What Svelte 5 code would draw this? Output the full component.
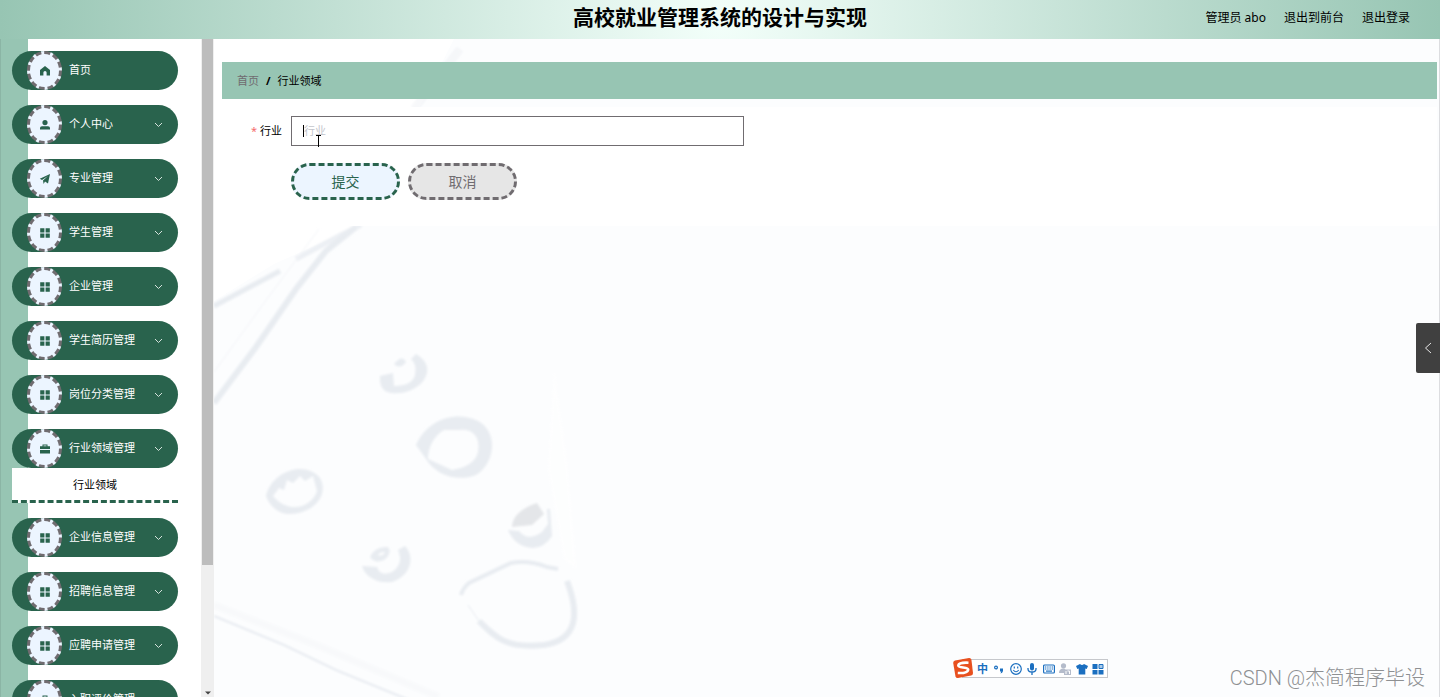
<script>
  const items = [
    { label: '首页', icon: 'home' },
    { label: '个人中心', icon: 'user', more: true },
    { label: '专业管理', icon: 'plane', more: true },
    { label: '学生管理', icon: 'menu', more: true },
    { label: '企业管理', icon: 'menu', more: true },
    { label: '学生简历管理', icon: 'menu', more: true },
    { label: '岗位分类管理', icon: 'menu', more: true },
    { label: '行业领域管理', icon: 'case', more: true, child: '行业领域' },
    { label: '企业信息管理', icon: 'menu', more: true },
    { label: '招聘信息管理', icon: 'menu', more: true },
    { label: '应聘申请管理', icon: 'menu', more: true },
    { label: '入职评价管理', icon: 'case', more: true }
  ];
  const icons = {
    home: 'M6 1 11 5V10.5H7.6V7.6A1.6 1.6 0 0 0 4.4 7.6V10.5H1V5Z',
    user: 'M6 1A2.6 2.6 0 1 1 6 6.2 2.6 2.6 0 0 1 6 1ZM1 10.5V9Q1 7.3 3 7.3H9Q11 7.3 11 9V10.5Z',
    plane: 'M11 1 9 10.5 6 8.6 4.6 11 4 7.6 9 3 3 7 .8 5.8Z',
    menu: 'M1.2 1.2H5.4V5.4H1.2ZM6.6 1.2H10.8V5.4H6.6ZM1.2 6.6H5.4V10.8H1.2ZM6.6 6.6H10.8V10.8H6.6Z',
    case: 'M1 3.2H3.5V1.4H8.5V3.2H11V6H1ZM4.5 2.4V3.2H7.5V2.4ZM1 7H11V10.6H1Z'
  };
  let industry = $state('');
</script>

<div class="page">
  <header>
    <h1>高校就业管理系统的设计与实现</h1>
    <nav class="account">
      <span>管理员 abo</span>
      <a href="#front">退出到前台</a>
      <a href="#logout">退出登录</a>
    </nav>
  </header>

  <div class="body">
    <aside>
      <ul class="menu">
        {#each items as item}
          <li>
            <button class="item" type="button">
              <span class="badge">
                <svg class="glyph" viewBox="0 0 12 12" aria-hidden="true"><path fill-rule="evenodd" d={icons[item.icon]} /></svg>
              </span>
              <span class="label">{item.label}</span>
              {#if item.more}
                <svg class="chevron" viewBox="0 0 9 6" aria-hidden="true"><path d="M1 1 4.5 4.5 8 1" /></svg>
              {/if}
            </button>
            {#if item.child}
              <a class="child" href="#industry">{item.child}</a>
            {/if}
          </li>
        {/each}
      </ul>
      <div class="track">
        <div class="thumb"></div>
        <svg class="down" viewBox="0 0 6 4" aria-hidden="true"><path d="M0 .5H6L3 3.5Z" /></svg>
      </div>
    </aside>

    <main>
      <svg class="backdrop" viewBox="0 0 1226 658" preserveAspectRatio="xMinYMin slice" aria-hidden="true">
        <defs>
          <filter id="soft" x="-10%" y="-10%" width="120%" height="120%"><feGaussianBlur stdDeviation="0.8" /></filter>
        </defs>
        <path d="M0 0H240L145 187 60 225 0 262Z" fill="#fff" />
        <path d="M340 330 354 430 362 530 350 520 334 430Z" fill="#fff" opacity=".6" filter="url(#soft)" />
        <g filter="url(#soft)" fill="none" stroke="#e8ecf1">
          <path d="M0 267 30 251 66 232" stroke-width="5" />
          <path d="M82 220 125 197 147 186" stroke-width="5" opacity=".8" />
          <path d="M200 70 246 10" stroke-width="8" opacity=".35" />
          <path d="M0 364 42 308 82 250 112 212 142 188" stroke-width="6" />
          <path d="M0 333 50 264 105 190" stroke-width="1" stroke="#f3f5f8" />
          <path d="M0 577 70 606 122 631 195 661" stroke-width="2" />
          <path d="M0 566 100 605 225 658" stroke-width="7" stroke="#f8f9fb" />
          <g fill="#e8ecf1" stroke="none">
            <path fill-rule="evenodd" d="M202 315Q217 324 212 337C206 352 183 358 171 352Q165 347 166 337L179 334 180 347Q198 347 201 336 203 325 197 320ZM180 325Q188 315 192 323 186 331 180 325Z" />
            <path fill-rule="evenodd" d="M202 406C213 380 243 371 264 382 285 393 281 425 262 436 241 444 220 434 212 420ZM230 391C219 397 214 410 214 420L238 431Q261 427 264 413C267 398 258 389 246 391Z" />
            <path fill-rule="evenodd" d="M52 457C58 432 91 421 106 439 116 457 98 476 73 475 60 473 54 463 52 457ZM59 457C75 476 98 468 103 452L99 437 91 442 86 437 79 444 73 441 70 451 65 449Z" />
            <path d="M148 527 163 528Q166 538 178 533 190 525 184 511L191 507C202 519 196 537 178 543 164 545 151 538 148 527Z" />
            <path fill-rule="evenodd" d="M156 518Q161 507 174 508 179 514 170 521 161 525 156 518ZM164 516Q167 518 171 514 168 511 164 516Z" />
            <path d="M294 491 305 492Q314 503 328 493L334 485 333 470 336 470 338 497Q330 509 319 509 301 508 294 491Z" />
            <path d="M298 488C298 478 307 469 323 464L330 475 318 486Z" fill="#e4e6e9" />
          </g>
          <path d="M247 556Q249 549 255 544L297 524Q315 521 333 528L344 530" stroke-width="4" />
          <path d="M353 542C366 576 363 601 330 606 293 610 282 599 265 582" stroke-width="6" />
          <path d="M265 582 254 566" stroke-width="1" />
        </g>
      </svg>

      <div class="crumbs">
        <a href="#home">首页</a><b>/</b><span>行业领域</span>
      </div>

      <form onsubmit={(e) => e.preventDefault()}>
        <div class="field">
          <label for="industry"><i>*</i> 行业</label>
          <div class="control">
            <input id="industry" type="text" placeholder="行业" bind:value={industry} />
            <span class="caret"></span>
            <svg class="pointer" viewBox="0 0 5 12" aria-hidden="true"><path d="M0 .5H5M2.5 0V12" /></svg>
          </div>
        </div>
        <div class="actions">
          <button class="submit" type="submit">提交</button>
          <button class="cancel" type="button">取消</button>
        </div>
      </form>
    </main>
  </div>

  <button class="drawer" type="button" aria-label="展开">
    <svg viewBox="0 0 8 12" aria-hidden="true"><path d="M7 1 1.5 6 7 11" /></svg>
  </button>

  <div class="ime">
    <svg class="logo" viewBox="0 0 22 22" aria-hidden="true">
      <path d="M3 3.5 17 1Q19 .8 19.4 2.6L21 16Q21 18 19.2 18.5L6 21Q4 21.2 3.5 19.4L1.2 6Q1 4 3 3.5Z" fill="#e8501f" />
      <path d="M16.5 5.7Q7 5.2 6.3 8.3C6 11.3 16.3 9.6 16.2 12.7Q15.5 16.5 5.8 16" fill="none" stroke="#fff" stroke-width="2.6" />
    </svg>
    <span class="lang">中</span>
    <svg viewBox="0 0 12 12" aria-hidden="true"><circle cx="3" cy="4.5" r="1.4" fill="none" stroke="#1b6fc0" stroke-width="1.2" /><path d="M7 5.500H10V8Q9.500 10 7.500 10.500L8.300 8.500H7Z" /></svg>
    <svg viewBox="0 0 12 12" aria-hidden="true"><g fill="none" stroke="#1b6fc0" stroke-width="1.2"><circle cx="6" cy="6" r="5.3" /><path d="M3.3 7Q6 10.5 8.7 7M4.300 3.500V5.500M7.700 3.500V5.500" /></g></svg>
    <svg viewBox="0 0 12 12" aria-hidden="true"><rect x="4" width="4" height="7.5" rx="2" /><path d="M2 5V6Q2 9 6 9T10 6V5M6 9V12" fill="none" stroke="#1b6fc0" stroke-width="1.3" /></svg>
    <svg viewBox="0 0 12 12" aria-hidden="true"><rect x=".6" y="2" width="10.8" height="8" rx="1" fill="none" stroke="#1b6fc0" stroke-width="1.2" /><path d="M2 4H10M2 6H10" stroke="#1b6fc0" stroke-width="1.2" stroke-dasharray="1.4 .8" /><path d="M3 7.5H9V8.7H3Z" /></svg>
    <svg class="muted" viewBox="0 0 12 12" aria-hidden="true"><circle cx="4.5" cy="2.8" r="2.6" /><path d="M0 10Q0 5.5 4.5 5.5 6 5.500 6.500 6.500H12V12H5V10Z" /><path d="M7 8V11M8.500 8H10.500V11" fill="none" stroke="#fff" /></svg>
    <svg viewBox="0 0 12 12" aria-hidden="true"><path d="M4 1Q6 3 8 1L12 3 10.7 6 9.3 5.5V11.500H2.700V5.500L1.300 6 0 3Z" /></svg>
    <svg viewBox="0 0 12 12" aria-hidden="true"><path d="M.5 1H5.5V6H.5ZM.5 7H5.500V11.500H.5ZM6.500 7H11.500V11.500H6.500Z" /><path d="M7 1.500H11V5.500H7Z" fill="#a9c9e8" stroke="#1b6fc0" /></svg>
  </div>

  <div class="watermark">CSDN @杰简程序毕设</div>
</div>

<style>
  :global(body) {
    margin: 0;
    overflow: hidden;
  }

  .page {
    position: relative;
    display: flex;
    flex-direction: column;
    height: 100vh;
    overflow: hidden;
    background: #fcfdfe;
    color: #000;
    font-family: "Noto Sans", "Noto Sans CJK SC", sans-serif;
    font-size: 11px;
  }

  a {
    color: inherit;
    text-decoration: none;
  }

  button,
  input {
    box-sizing: border-box;
    margin: 0;
    font: inherit;
  }

  header {
    display: grid;
    grid-template-columns: 1fr auto 1fr;
    flex: none;
    height: 39px;
    background: radial-gradient(circle farthest-side at center, #f3fffa 0%, #97c5b3 100%);
  }

  h1 {
    grid-column: 2;
    margin: 0;
    font-size: 21px;
    line-height: 34px;
  }

  .account {
    display: flex;
    justify-content: flex-end;
    gap: 18px;
    padding-right: 30px;
    font-size: 12px;
    line-height: 36px;
  }

  .body {
    display: flex;
    flex: 1;
    min-height: 0;
  }

  aside {
    display: flex;
    flex: none;
    width: 214px;
    overflow: hidden;
    background: linear-gradient(90deg, #8bb5a5 1px, #97c5b3 1px 28px, #fff 28px);
  }

  .menu {
    display: flex;
    flex: 1;
    flex-direction: column;
    gap: 15px;
    margin: 0;
    padding: 12px 23px 0 12px;
    list-style: none;
  }

  .item {
    display: flex;
    align-items: center;
    width: 100%;
    height: 39px;
    padding: 0 15px 0 15px;
    border: 0;
    border-radius: 20px;
    background: #29634d;
    color: #fff;
    line-height: 16px;
  }

  .badge {
    display: grid;
    box-sizing: border-box;
    place-items: center;
    width: 35px;
    height: 39px;
    margin-right: 7px;
    border: 3px dashed #706c70;
    border-radius: 100%;
    background: #ecf5ff;
  }

  .glyph {
    width: 12px;
    height: 12px;
    fill: #29634d;
  }

  .label {
    flex: 1;
    padding-bottom: 2px;
    text-align: left;
  }

  .chevron {
    width: 9px;
    height: 6px;
    fill: none;
    stroke: #d5e2dc;
  }

  .child {
    display: block;
    box-sizing: border-box;
    height: 35px;
    border-bottom: 3px dashed #29634d;
    background: #fff;
    line-height: 34px;
    text-align: center;
  }

  .track {
    display: flex;
    flex-direction: column;
    align-items: center;
    justify-content: space-between;
    width: 13px;
    background: #efefef;
  }

  .thumb {
    width: 11px;
    height: 80%;
    background: #bdbdbd;
  }

  .down {
    width: 6px;
    height: 4px;
    margin-bottom: 2px;
    fill: #444;
  }

  main {
    position: relative;
    flex: 1;
    min-width: 0;
    padding: 23px 2px 0 8px;
    border-right: 1px solid #dcdde0;
  }

  .backdrop {
    position: absolute;
    inset: 0;
    width: 100%;
    height: 100%;
  }

  .crumbs {
    position: relative;
    display: flex;
    gap: 7px;
    padding-left: 15px;
    background: #97c5b3;
    line-height: 37px;
  }

  .crumbs a {
    color: #706c70;
  }

  form {
    position: relative;
    margin-top: 8px;
    padding: 9px 0 26px;
    background: #fff;
  }

  .field {
    display: flex;
    line-height: 30px;
  }

  label {
    width: 60px;
    margin-right: 9px;
    text-align: right;
  }

  i {
    color: #f56c6c;
    font-style: normal;
  }

  .control {
    position: relative;
    flex: 1;
    min-width: 0;
    max-width: 453px;
    height: 30px;
  }

  input {
    display: block;
    width: 100%;
    height: 30px;
    padding: 0 12px;
    border: 1px solid #706c70;
    background: #fff;
    outline: none;
  }

  input::placeholder {
    color: #c3c5cb;
    opacity: 1;
  }

  .caret {
    position: absolute;
    top: 9px;
    left: 12px;
    width: 1px;
    height: 12px;
    background: #000;
  }

  .pointer {
    position: absolute;
    top: 19px;
    left: 25px;
    width: 5px;
    height: 12px;
    stroke: #000;
  }

  .actions {
    display: flex;
    gap: 8px;
    margin: 17px 0 0 69px;
  }

  .actions button {
    width: 109px;
    height: 37px;
    padding: 0;
    border: 3px dashed #29634d;
    border-radius: 19px;
    background: #ecf5ff;
    color: #29634d;
    font-size: 14px;
    line-height: 30px;
  }

  .actions .cancel {
    border-color: #706c70;
    background: #e6e6e6;
    color: #706c70;
  }

  .drawer {
    position: absolute;
    top: 323px;
    right: 0;
    display: grid;
    place-items: center;
    width: 24px;
    height: 50px;
    padding: 0;
    border: 0;
    border-radius: 2px 0 0 2px;
    background: #404040;
  }

  .drawer svg {
    width: 8px;
    height: 12px;
    fill: none;
    stroke: #e6e6e6;
  }

  .ime {
    position: absolute;
    right: 332px;
    bottom: 19px;
    display: flex;
    align-items: center;
    justify-content: space-between;
    box-sizing: border-box;
    width: 146px;
    height: 19px;
    padding: 0 3px 0 14px;
    border: 1px solid #c6c8cc;
    background: #fff;
    color: #1b6fc0;
  }

  .ime svg {
    flex: none;
    width: 12px;
    height: 12px;
    fill: #1b6fc0;
  }

  .ime .logo {
    position: absolute;
    top: -3px;
    left: -11px;
    width: 22px;
    height: 22px;
  }

  .ime .muted {
    fill: #b5bccb;
  }

  .lang {
    width: 12px;
    font-weight: 700;
    line-height: 17px;
  }

  .watermark {
    position: absolute;
    right: 15px;
    bottom: 4px;
    color: #8e9092;
    font-family: Roboto, "Noto Sans CJK SC", sans-serif;
    font-size: 20px;
    font-weight: 300;
    line-height: 30px;
  }
</style>
